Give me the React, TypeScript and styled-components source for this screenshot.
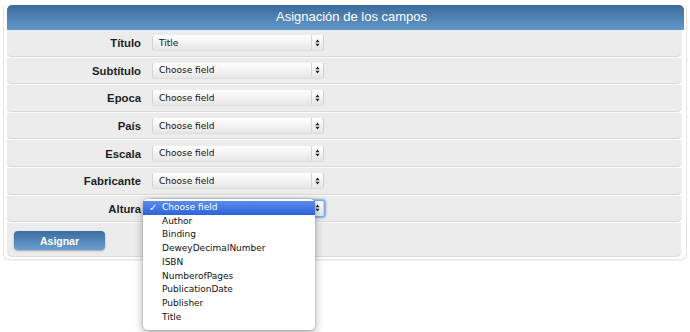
import React from "react";
import styled, { createGlobalStyle } from "styled-components";

const Global = createGlobalStyle`
  html, body { margin: 0; padding: 0; background: #ffffff; }
  html, body, #root { min-height: 332px; }
  body { font-family: "Liberation Sans", Arial, sans-serif; }
`;

const Panel = styled.div`
  position: relative;
  margin: 5px 3px 0 3px;
  padding: 0 3px 3px 3px;
  border: 1px solid #e6e6e6;
  border-top: none;
  border-radius: 0 0 6px 6px;
  box-shadow: 0 1px 1px rgba(0, 0, 0, 0.06);
`;

const Header = styled.div`
  height: 25px;
  margin: 0 -1px 0 0;
  border-radius: 5px 5px 0 0;
  background: linear-gradient(#3b6b9c, #6598ca);
  color: #ffffff;
  font-size: 13px;
  line-height: 24px;
  text-align: center;
  padding-left: 12px;
`;

const Rows = styled.div`
  display: flex;
  flex-direction: column;
  gap: 2px;
  margin-right: 2px;
`;

const Row = styled.div`
  height: 25.6px;
  display: flex;
  align-items: center;
  background: #ececec;
  border-radius: 0 0 4px 4px;
  box-shadow: 0 1px 1px rgba(0, 0, 0, 0.16), 1px 0 1px rgba(0, 0, 0, 0.05);
`;

const Label = styled.div`
  width: 134px;
  flex: none;
  text-align: right;
  font-weight: bold;
  font-size: 11.3px;
  color: #1e1e1e;
  margin-right: 11px;
  padding-top: 1px;
`;

const SelectWrap = styled.div`
  position: relative;
  width: 172px;
  height: 15px;
`;

const SelectBox = styled.div<{ $focused?: boolean }>`
  box-sizing: border-box;
  width: 100%;
  height: 100%;
  display: flex;
  align-items: center;
  background: linear-gradient(#ffffff, #f3f3f3 50%, #e6e6e6);
  border-left: 1px solid #d4d4d4;
  border-right: 1px solid #d0d0d0;
  border-radius: 2px;
  box-shadow: ${(p) =>
    p.$focused ? "0 0 2px 2px rgba(90, 140, 220, 0.75)" : "0 1px 0 rgba(0,0,0,0.06)"};
`;

const SelectText = styled.div`
  flex: 1;
  padding-left: 6px;
  font-family: "DejaVu Sans", "Liberation Sans", sans-serif;
  font-size: 9px;
  color: #111111;
`;

const Arrows = styled.div`
  width: 11px;
  height: 100%;
  flex: none;
  display: flex;
  align-items: center;
  justify-content: center;
  border-left: 1px solid #d8d8d8;
`;

const Footer = styled.div`
  margin-top: 2px;
  margin-right: 2px;
  height: 33px;
  background: #ececec;
  border-radius: 0 0 5px 5px;
  box-shadow: 0 1px 1px rgba(0, 0, 0, 0.16);
  display: flex;
  align-items: flex-start;
  padding: 8px 7px 0 7px;
  box-sizing: border-box;
`;

const Button = styled.button`
  width: 91px;
  height: 19px;
  border: none;
  border-radius: 4px;
  background: linear-gradient(#3c6ca0, #6a9dd0);
  color: #ffffff;
  font-family: "Liberation Sans", Arial, sans-serif;
  font-weight: bold;
  font-size: 10.5px;
  box-shadow: 0 1px 2px rgba(0, 0, 0, 0.3);
  padding: 0;
`;

const Menu = styled.div`
  position: absolute;
  left: -9px;
  top: -2px;
  width: 172px;
  padding: 2px 0 5px 0;
  background: #ffffff;
  border-radius: 5px;
  box-shadow: 0 3px 8px rgba(0, 0, 0, 0.35), 0 0 0 1px rgba(0, 0, 0, 0.06);
  z-index: 10;
  font-family: "DejaVu Sans", "Liberation Sans", sans-serif;
  font-size: 9px;
`;

const MenuItem = styled.div<{ $active?: boolean }>`
  position: relative;
  height: 13.75px;
  line-height: 13.75px;
  padding-left: 19px;
  color: ${(p) => (p.$active ? "#ffffff" : "#111111")};
  background: ${(p) => (p.$active ? "linear-gradient(#5b8cec, #2d63da)" : "transparent")};
`;

const Check = styled.span`
  position: absolute;
  left: 6px;
  top: 0;
  font-size: 10px;
`;

const ArrowIcon = () => (
  <svg width="5" height="8" viewBox="0 0 5 8">
    <path d="M2.5 0.5 L4.6 3.2 H0.4 Z" fill="#222" />
    <path d="M2.5 7.5 L4.6 4.8 H0.4 Z" fill="#222" />
  </svg>
);

const fields: [string, string][] = [
  ["Título", "Title"],
  ["Subtítulo", "Choose field"],
  ["Epoca", "Choose field"],
  ["País", "Choose field"],
  ["Escala", "Choose field"],
  ["Fabricante", "Choose field"],
];

const options = [
  "Choose field",
  "Author",
  "Binding",
  "DeweyDecimalNumber",
  "ISBN",
  "NumberofPages",
  "PublicationDate",
  "Publisher",
  "Title",
];

export default function App() {
  return (
    <>
      <Global />
      <Panel>
        <Header>Asignación de los campos</Header>
        <Rows>
          {fields.map(([label, value]) => (
            <Row key={label}>
              <Label>{label}</Label>
              <SelectWrap>
                <SelectBox>
                  <SelectText>{value}</SelectText>
                  <Arrows>
                    <ArrowIcon />
                  </Arrows>
                </SelectBox>
              </SelectWrap>
            </Row>
          ))}
          <Row>
            <Label>Altura</Label>
            <SelectWrap>
              <SelectBox $focused>
                <SelectText>Choose field</SelectText>
                <Arrows>
                  <ArrowIcon />
                </Arrows>
              </SelectBox>
              <Menu>
                {options.map((o, i) => (
                  <MenuItem key={o} $active={i === 0}>
                    {i === 0 && <Check>✓</Check>}
                    {o}
                  </MenuItem>
                ))}
              </Menu>
            </SelectWrap>
          </Row>
        </Rows>
        <Footer>
          <Button>Asignar</Button>
        </Footer>
      </Panel>
    </>
  );
}
